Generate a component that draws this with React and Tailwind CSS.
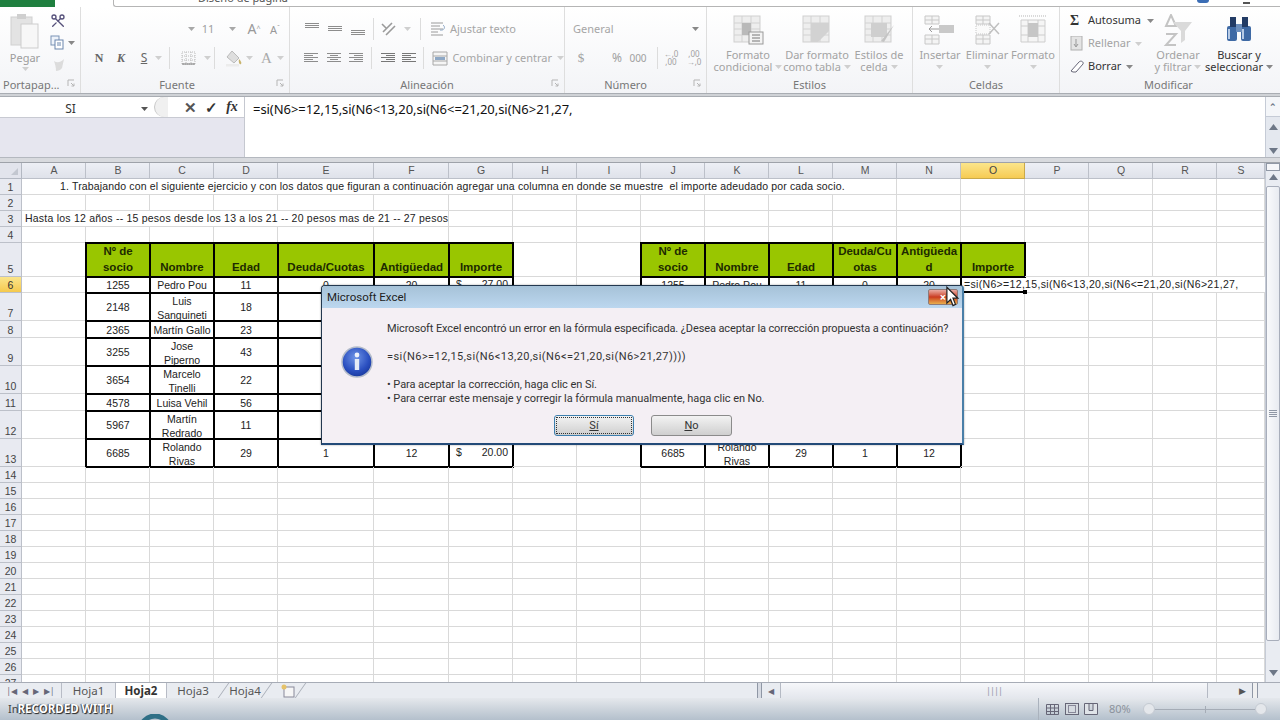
import React from 'react';
import { Scissors } from 'lucide-react';

const Caret = ({ c = '#a8a8a8' }) => (
  <svg width="7" height="4" viewBox="0 0 7 4" className="shrink-0"><path d="M0 0h7L3.5 4z" fill={c} /></svg>
);

const Launcher = () => (
  <svg width="9" height="9" viewBox="0 0 9 9" className="shrink-0">
    <path d="M1 7V1h6M4 4l3 3M7 4.5V7H4.5" fill="none" stroke="#b5b5b5" />
  </svg>
);

// little stack of horizontal lines, used by all the align buttons
const Lines = ({ widths, y = 2, c = '#8d8d8d' }) => (
  <svg width="16" height="14" viewBox="0 0 16 14">
    {widths.map((w, i) => {
      const x = w.a === 'c' ? 8 - w.w / 2 : w.a === 'r' ? 15 - w.w : 1;
      return <rect key={i} x={x} y={y + i * 2} width={w.w} height="1" fill={c} />;
    })}
  </svg>
);

const full = (n) => Array.from({ length: n }, () => ({ w: 14 }));
const alignL = [{ w: 14 }, { w: 9 }, { w: 14 }, { w: 9 }, { w: 14 }];
const alignC = [{ w: 14, a: 'c' }, { w: 8, a: 'c' }, { w: 14, a: 'c' }, { w: 8, a: 'c' }, { w: 14, a: 'c' }];
const alignR = [{ w: 14, a: 'r' }, { w: 9, a: 'r' }, { w: 14, a: 'r' }, { w: 9, a: 'r' }, { w: 14, a: 'r' }];

const Sep = () => <div className="w-px h-[22px] bg-[#dcdcdc] shrink-0" />;

const Group = ({ className, label, launcher, children }) => (
  <div className={`shrink-0 h-full flex flex-col border-r border-[#dedede] ${className}`}>
    <div className="flex-1 min-h-0">{children}</div>
    <div className="h-[16px] mb-[1px] flex items-center justify-center relative text-[11px] text-[#777] leading-none">
      {label}
      {launcher && <span className="absolute right-[4px] top-[3px]"><Launcher /></span>}
    </div>
  </div>
);

const GridIcon = ({ kind }) => (
  <svg width="32" height="30" viewBox="0 0 32 30">
    <rect x="2" y="1" width="26" height="26" fill="#eeeeee" stroke="#cfcfcf" />
    <path d="M2 8h26M2 14h26M2 20h26M10 1v26M19 1v26" stroke="#d2d2d2" fill="none" />
    {kind === 'cond' && (
      <>
        <rect x="10" y="8" width="9" height="12" fill="#b9b9b9" />
        <rect x="17" y="17" width="14" height="12" fill="#f3f3f3" stroke="#9a9a9a" />
        <path d="M20 20h8M20 23h8M20 26h8" stroke="#777" />
      </>
    )}
    {kind === 'table' && <path d="M2 8h26v8L17 27H10V8H2z" fill="#d2d2d2" />}
    {kind === 'style' && (
      <>
        <rect x="8" y="8" width="16" height="14" fill="#cfcfcf" />
        <path d="M31 10 21 27l-3-1z" fill="#c4c4c4" />
      </>
    )}
  </svg>
);

const CellIcon = ({ kind }) => (
  <svg width="34" height="30" viewBox="0 0 34 30">
    {kind === 'ins' && (
      <>
        <path d="M2 1h14v8H2zM2 20h14v9H2zM9 1v8M9 20v9M2 5h14M2 24h14" fill="#f4f4f4" stroke="#c8c8c8" />
        <rect x="16" y="10" width="15" height="8" fill="#c9c9c9" />
        <path d="M6 14h10M9 11l-3 3 3 3" stroke="#9a9a9a" fill="none" />
      </>
    )}
    {kind === 'del' && (
      <>
        <path d="M6 1h14v8H6zM6 20h14v9H6zM13 1v8M13 20v9M6 5h14M6 24h14" fill="#f4f4f4" stroke="#c8c8c8" />
        <rect x="6" y="10" width="14" height="9" fill="#fafafa" stroke="#c8c8c8" strokeDasharray="1 1" />
        <path d="M19 8l10 11M29 8 19 19" stroke="#c0c0c0" strokeWidth="1.5" />
      </>
    )}
    {kind === 'fmt' && (
      <>
        <path d="M3 1h28" stroke="#b5b5b5" strokeDasharray="1 1" />
        <path d="M5 5h24v22H5zM5 11h24M5 20h24M12 5v22M22 5v22" fill="#f5f5f5" stroke="#cdcdcd" />
        <rect x="12" y="8" width="10" height="14" fill="#c6c6c6" />
      </>
    )}
  </svg>
);

const BigButton = ({ className, kind, cell, lines }) => (
  <div className={`shrink-0 flex flex-col items-center pt-[8px] ${className}`}>
    <div className="h-[30px]">{cell ? <CellIcon kind={kind} /> : <GridIcon kind={kind} />}</div>
    <div className="mt-[4px] text-center text-[11px] leading-[12px] text-[#a3a3a3] whitespace-nowrap">
      <div>{lines[0]}</div>
      <div className="flex items-center justify-center gap-[3px] h-[12px]">{lines[1]}<Caret c="#cfcfcf" /></div>
    </div>
  </div>
);

const Ribbon = () => (
  <div className="h-[86px] flex bg-gradient-to-b from-[#ffffff] to-[#f3f4f7] text-[#a3a3a3] text-[11px]">
    <Group className="w-[81px]" label={<span className="w-full pl-[3px] text-left">Portapap...</span>} launcher>
      <div className="flex">
        <div className="w-[50px] flex flex-col items-center pt-[7px]">
          <svg width="30" height="35" viewBox="0 0 30 35">
            <rect x="1" y="3" width="21" height="28" fill="#e3e3e3" stroke="#d0d0d0" />
            <rect x="7" y="0" width="9" height="5" fill="#cfcfcf" />
            <rect x="11" y="10" width="17" height="24" fill="#f7f7f7" stroke="#cdcdcd" />
          </svg>
          <span className="mt-[3px] leading-none text-[#9c9c9c]">Pegar</span>
          <span className="mt-[4px]"><Caret c="#cfcfcf" /></span>
        </div>
        <div className="flex flex-col pt-[6px] gap-[6px]">
          <Scissors size={16} strokeWidth={2} className="text-[#55507a] rotate-90" />
          <div className="flex items-center gap-[3px]">
            <svg width="15" height="15" viewBox="0 0 15 15">
              <rect x="1" y="1" width="8" height="9" fill="#eef3fa" stroke="#7a93b5" />
              <rect x="5" y="5" width="8" height="9" fill="#fff" stroke="#6b86ad" />
              <path d="M7 8h4M7 10h4" stroke="#6b86ad" />
            </svg>
            <Caret c="#888" />
          </div>
          <svg width="16" height="16" viewBox="0 0 16 16">
            <path d="M4 5c3 2 6 2 10-2l-2 9c-1 2-4 3-6 3C6 11 5 8 4 5z" fill="#dcdcdc" />
          </svg>
        </div>
      </div>
    </Group>

    <Group className="w-[209px]" label={<span className="pr-[16px]">Fuente</span>} launcher>
      <div className="flex items-center h-[16px] mt-[14px] pl-[107px]">
        <span className="w-[8px]"><Caret /></span>
        <span className="w-[24px] text-center text-[#a0a0a0]">11</span>
        <span className="w-[24px] flex justify-center"><Caret /></span>
        <span className="w-[20px] text-center text-[14px] leading-none text-[#999]">A<sup className="text-[7px]">^</sup></span>
        <span className="w-[22px] text-center text-[11px] leading-none text-[#999]">A<sup className="text-[7px]">ˇ</sup></span>
      </div>
      <div className="flex items-center h-[16px] mt-[13px] pl-[8px]">
        <span className="w-[20px] text-center font-bold text-[12px] text-[#666] font-['Liberation_Serif',serif]">N</span>
        <span className="w-[24px] text-center font-bold italic text-[12px] text-[#666] font-['Liberation_Serif',serif]">K</span>
        <span className="w-[22px] text-center underline text-[12px] text-[#666]">S</span>
        <span className="w-[14px]"><Caret c="#cfcfcf" /></span>
        <Sep />
        <span className="w-[24px] ml-[6px] flex justify-center">
          <svg width="15" height="14" viewBox="0 0 15 14">
            <path d="M1 1h13v12H1zM5 1v12M10 1v12M1 5h13M1 9h13" fill="none" stroke="#bcbcbc" strokeDasharray="1 1" />
            <path d="M1 13h13" stroke="#777" />
          </svg>
        </span>
        <span className="w-[14px] flex justify-center"><Caret c="#cfcfcf" /></span>
        <Sep />
        <span className="w-[24px] ml-[7px] flex justify-center">
          <svg width="18" height="17" viewBox="0 0 18 17">
            <path d="M7 1l7 7-5 5-7-6z" fill="#dedede" stroke="#bbb" />
            <path d="M14 9c2 2 3 4 2 5s-3-1-2-5z" fill="#c9b46e" />
            <rect x="1" y="14" width="13" height="2.5" fill="#ececec" />
          </svg>
        </span>
        <span className="w-[10px]"><Caret c="#cfcfcf" /></span>
        <span className="w-[21px] text-center text-[15px] leading-none text-[#aaa] font-['Liberation_Serif',serif]">A</span>
        <span className="w-[10px]"><Caret c="#cfcfcf" /></span>
      </div>
    </Group>

    <Group className="w-[275px]" label="Alineación" launcher>
      <div className="flex items-center h-[16px] mt-[14px] pl-[10px]">
        <span className="w-[23px] flex justify-center"><Lines widths={full(3)} y={1} /></span>
        <span className="w-[23px] flex justify-center"><Lines widths={full(3)} y={4} /></span>
        <span className="w-[23px] flex justify-center"><Lines widths={full(3)} y={8} /></span>
        <span className="w-[4px]" />
        <Sep />
        <span className="w-[30px] flex justify-center">
          <svg width="18" height="16" viewBox="0 0 18 16">
            <path d="M3 11 12 2M6 14l9-9M2 3l5 5" stroke="#9a9a9a" strokeWidth="1.6" fill="none" />
          </svg>
        </span>
        <span className="w-[10px]"><Caret c="#cfcfcf" /></span>
        <span className="w-[6px]" />
        <Sep />
        <span className="w-[9px]" />
        <svg width="16" height="16" viewBox="0 0 16 16" className="shrink-0">
          <path d="M1 2h12M1 5h9M1 8h12M1 11h7M1 14h12" stroke="#9a9a9a" />
          <path d="M13 4c3 2 1 6-3 5" fill="none" stroke="#8ea8c6" />
        </svg>
        <span className="ml-[4px] text-[#a6a6a6]">Ajustar texto</span>
      </div>
      <div className="flex items-center h-[16px] mt-[13px] pl-[10px]">
        <span className="w-[23px] flex justify-center"><Lines widths={alignL} /></span>
        <span className="w-[23px] flex justify-center"><Lines widths={alignC} /></span>
        <span className="w-[23px] flex justify-center"><Lines widths={alignR} /></span>
        <span className="w-[4px]" />
        <Sep />
        <span className="w-[24px] ml-[4px] flex justify-center"><Lines widths={alignR} c="#777" /></span>
        <span className="w-[20px] flex justify-center"><Lines widths={alignL} c="#777" /></span>
        <span className="w-[4px]" />
        <Sep />
        <span className="w-[9px]" />
        <svg width="16" height="15" viewBox="0 0 16 15" className="shrink-0">
          <path d="M1 1h14v13H1zM1 5h14M1 10h14" fill="#f5f5f5" stroke="#a8a8a8" />
          <rect x="3" y="6" width="10" height="3" fill="#8ea8c6" />
        </svg>
        <span className="ml-[4px] text-[#a6a6a6] whitespace-nowrap">Combinar y centrar</span>
        <span className="ml-[5px]"><Caret c="#cfcfcf" /></span>
      </div>
    </Group>

    <Group className="w-[142px]" label={<span className="pr-[20px]">Número</span>} launcher>
      <div className="flex items-center justify-between h-[16px] mt-[14px] pl-[8px] pr-[7px]">
        <span className="text-[#a6a6a6]">General</span>
        <Caret c="#888" />
      </div>
      <div className="flex items-center h-[16px] mt-[13px] pl-[10px] text-[#a0a0a0]">
        <span className="w-[12px] text-center font-['Liberation_Serif',serif] text-[13px]">$</span>
        <span className="w-[22px]" />
        <span className="w-[16px] text-center text-[12px]">%</span>
        <span className="w-[26px] text-center text-[10px]">000</span>
        <span className="w-[6px]" />
        <Sep />
        <span className="w-[26px] text-center text-[8px] leading-[8px]">←,0<br />,00</span>
        <span className="w-[20px] text-center text-[8px] leading-[8px]">,00<br />→,0</span>
      </div>
    </Group>

    <Group className="w-[206px]" label="Estilos">
      <div className="flex pl-[7px]">
        <BigButton className="w-[68px]" kind="cond" lines={['Formato', 'condicional']} />
        <BigButton className="w-[70px]" kind="table" lines={['Dar formato', 'como tabla']} />
        <BigButton className="w-[54px]" kind="style" lines={['Estilos de', 'celda']} />
      </div>
    </Group>

    <Group className="w-[147px]" label="Celdas">
      <div className="flex pl-[3px]">
        <BigButton cell className="w-[48px]" kind="ins" lines={['Insertar', '']} />
        <BigButton cell className="w-[46px]" kind="del" lines={['Eliminar', '']} />
        <BigButton cell className="w-[46px]" kind="fmt" lines={['Formato', '']} />
      </div>
    </Group>

    <Group className="w-[217px] border-r-0" label="Modificar">
      <div className="flex">
        <div className="w-[95px] pl-[10px] pt-[6px] flex flex-col gap-[8px]">
          <div className="flex items-center h-[15px] text-[#333]">
            <span className="w-[18px] font-bold text-[14px] leading-none font-['Liberation_Serif',serif]">Σ</span>
            <span>Autosuma</span>
            <span className="ml-[6px]"><Caret c="#888" /></span>
          </div>
          <div className="flex items-center h-[15px] text-[#a3a3a3]">
            <svg width="18" height="15" viewBox="0 0 18 15" className="shrink-0">
              <rect x="1" y="0" width="11" height="14" fill="#e4e4e4" stroke="#b0b0b0" />
              <path d="M6 3v7M4 8l2 3 2-3" stroke="#999" fill="none" />
            </svg>
            <span>Rellenar</span>
            <span className="ml-[5px]"><Caret c="#cfcfcf" /></span>
          </div>
          <div className="flex items-center h-[15px] text-[#333]">
            <svg width="18" height="15" viewBox="0 0 18 15" className="shrink-0">
              <path d="M1 12 9 3c2-2 5 0 4 2L6 13H3z" fill="#fff" stroke="#667" />
            </svg>
            <span>Borrar</span>
            <span className="ml-[5px]"><Caret c="#888" /></span>
          </div>
        </div>
        <div className="w-[46px] flex flex-col items-center pt-[7px]">
          <svg width="30" height="32" viewBox="0 0 30 32">
            <path d="M8 1 3 12h10zM3 20h10L3 31h10" fill="none" stroke="#c4c4c4" strokeWidth="2" />
            <path d="M10 8h19l-7 9v9l-4 3V17z" fill="#dadada" />
          </svg>
          <div className="mt-[3px] text-center leading-[12px] text-[#a3a3a3] whitespace-nowrap">
            <div>Ordenar</div>
            <div className="flex items-center gap-[3px]">y filtrar<Caret c="#cfcfcf" /></div>
          </div>
        </div>
        <div className="w-[76px] flex flex-col items-center pt-[7px]">
          <svg width="30" height="32" viewBox="0 0 30 32">
            <rect x="3" y="12" width="10" height="15" rx="2" fill="#3f6aa5" />
            <rect x="17" y="12" width="10" height="15" rx="2" fill="#3f6aa5" />
            <rect x="6" y="3" width="6" height="10" fill="#233c66" />
            <rect x="18" y="3" width="6" height="10" fill="#233c66" />
            <rect x="12" y="10" width="6" height="8" fill="#6d8fbd" />
            <path d="M5 15v10M19 15v10" stroke="#b7cbe6" strokeWidth="2" />
          </svg>
          <div className="mt-[3px] text-center leading-[12px] text-[#333] whitespace-nowrap">
            <div>Buscar y</div>
            <div className="flex items-center gap-[3px]">seleccionar<Caret c="#888" /></div>
          </div>
        </div>
      </div>
    </Group>
  </div>
);

const ScrollBtn = ({ up }) => (
  <svg width="9" height="6" viewBox="0 0 9 6"><path d={up ? 'M0 6h9L4.5 0z' : 'M0 0h9L4.5 6z'} fill="#6d7787" /></svg>
);

const FormulaBar = () => (
  <div className="h-[61px] flex bg-white text-[12px] border-b border-[#b4b8bf]">
    <div className="w-[245px] shrink-0 flex flex-col border-r border-[#c5c8d0]">
      <div className="h-[21px] flex items-center border-b border-[#c8cad2]">
        <div className="w-[148px] flex items-center pt-[3px]">
          <span className="w-[142px] text-center text-[12px] text-[#333]">SI</span>
          <Caret c="#555" />
        </div>
        <div className="h-full w-[14px] ml-[6px] rounded-l-full border-l border-[#c7c7c7] bg-[#f0f0f0]" />
        <span className="w-[22px] ml-[11px] text-center text-[15px] font-bold text-[#555] leading-none">✕</span>
        <span className="w-[20px] text-center text-[15px] font-bold text-[#333] leading-none">✓</span>
        <span className="w-[22px] text-center font-['Liberation_Serif',serif] italic font-bold text-[14px] leading-none text-[#333]">fx</span>
      </div>
      <div className="flex-1 bg-[#e6e6ef]" />
    </div>
    <div className="flex-1 pl-[8px] pt-[3px] text-[13px] leading-[18px] text-[#111] tracking-[-0.05px]">=si(N6&gt;=12,15,si(N6&lt;13,20,si(N6&lt;=21,20,si(N6&gt;21,27,</div>
    <div className="w-[15px] shrink-0 flex flex-col items-center bg-[#e4e8ef] border-l border-[#c5cbd6]">
      <div className="h-[20px] w-full flex items-center justify-center bg-[#f4f6f9] border-b border-[#c5cbd6] text-[9px] text-[#6d7787] leading-none font-bold">⌃</div>
      <div className="mt-[7px]"><ScrollBtn up /></div>
      <div className="mt-[18px]"><ScrollBtn /></div>
    </div>
  </div>
);

const columns = ['A', 'B', 'C', 'D', 'E', 'F', 'G', 'H', 'I', 'J', 'K', 'L', 'M', 'N', 'O', 'P', 'Q', 'R', 'S'];

const socios = [
  [6, '1255', ['Pedro Pou'], '11', '0', '20', '27.00'],
  [7, '2148', ['Luis', 'Sanguineti'], '18', '', '', ''],
  [8, '2365', ['Martín Gallo'], '23', '', '', ''],
  [9, '3255', ['Jose', 'Piperno'], '43', '', '', ''],
  [10, '3654', ['Marcelo', 'Tinelli'], '22', '', '', ''],
  [11, '4578', ['Luisa Vehil'], '56', '', '', ''],
  [12, '5967', ['Martín', 'Redrado'], '11', '', '', ''],
  [13, '6685', ['Rolando', 'Rivas'], '29', '1', '12', '20.00'],
];

const tableBorder = 'border border-black shadow-[0_0_0_1px_#000]';

const Head = ({ lines }) => (
  <div className={`${tableBorder} bg-[#99c600] flex flex-col items-center justify-end pb-[1px] text-[11.5px] leading-[16px] font-bold text-[#1d2a00] text-center`}>
    {lines.map((l) => <span key={l}>{l}</span>)}
  </div>
);

const Data = ({ two, children }) => (
  <div className={`${tableBorder} ${two ? 'pt-[2px]' : ''} flex flex-col items-center justify-center text-center text-[10.5px] leading-[14px] text-[#222] overflow-hidden`}>
    {children}
  </div>
);

const Blank = () => <div className="border-r border-b border-[#d9d9d9]" />;

const RowHead = ({ n }) => (
  <div className={`flex items-end justify-center text-[10.5px] leading-[14px] border-b border-r border-[#bcc0c9] ${n === 6 ? 'bg-gradient-to-b from-[#fbe58a] to-[#f5c94c] text-[#333]' : 'bg-[#e8eaf1] text-[#444]'}`}>
    {n}
  </div>
);

const sheetCells = (n) => {
  const cells = [];
  const blanks = (count, prefix) => {
    for (let i = 0; i < count; i++) cells.push(<Blank key={`${prefix}-${i}`} />);
  };

  if (n === 1) {
    cells.push(
      <div key="t" className="col-span-13 border-b border-r border-[#d9d9d9] pl-[38px] flex items-end text-[10.5px] leading-[15px] text-[#222] whitespace-nowrap tracking-[0.155px]">
        1. Trabajando con el siguiente ejercicio y con los datos que figuran a continuación agregar una columna en donde se muestre&nbsp; el importe adeudado por cada socio.
      </div>
    );
    blanks(6, 'r1');
  } else if (n === 3) {
    cells.push(
      <div key="t" className="col-span-6 border-b border-r border-[#d9d9d9] pl-[3px] flex items-end text-[10.5px] leading-[15px] text-[#222] whitespace-nowrap tracking-[0.22px]">
        Hasta los 12 años -- 15 pesos desde los 13 a los 21 -- 20 pesos mas de 21 -- 27 pesos
      </div>
    );
    blanks(13, 'r3');
  } else if (n === 5) {
    blanks(1, 'a');
    [['Nº de', 'socio'], ['Nombre'], ['Edad'], ['Deuda/Cuotas'], ['Antigüedad'], ['Importe']].forEach((l, i) => cells.push(<Head key={`h${i}`} lines={l} />));
    blanks(2, 'hi');
    [['Nº de', 'socio'], ['Nombre'], ['Edad'], ['Deuda/Cu', 'otas'], ['Antigüeda', 'd'], ['Importe']].forEach((l, i) => cells.push(<Head key={`j${i}`} lines={l} />));
    blanks(4, 'ps');
  } else if (n >= 6 && n <= 13) {
    const [, id, name, edad, deuda, ant, imp] = socios[n - 6];
    const nameCell = name.map((l) => <span key={l}>{l}</span>);
    const two = name.length > 1;
    blanks(1, 'a');
    cells.push(<Data key="b">{id}</Data>, <Data key="c" two={two}>{nameCell}</Data>, <Data key="d">{edad}</Data>, <Data key="e">{deuda}</Data>, <Data key="f">{ant}</Data>);
    cells.push(
      <div key="g" className={`${tableBorder} flex items-center justify-between pl-[6px] pr-[4px] text-[10.5px] text-[#222]`}>
        {imp && <span>$</span>}
        {imp && <span>{imp}</span>}
      </div>
    );
    blanks(2, 'hi');
    cells.push(<Data key="j">{id}</Data>, <Data key="k" two={two}>{nameCell}</Data>, <Data key="l">{edad}</Data>, <Data key="m">{deuda}</Data>, <Data key="n">{ant}</Data>);
    if (n === 6) {
      cells.push(
        <div key="o" className="col-span-5 relative border-b border-[#d9d9d9] flex items-center pl-[3px] text-[10.5px] text-[#222] whitespace-nowrap tracking-[0.33px]">
          =si(N6&gt;=12,15,si(N6&lt;13,20,si(N6&lt;=21,20,si(N6&gt;21,27,
          <span className="absolute left-0 -bottom-[1px] w-[64px] h-[2px] bg-black" />
          <span className="absolute left-[62px] -bottom-[2px] w-[4px] h-[4px] bg-black" />
        </div>
      );
    } else {
      blanks(5, 'os');
    }
  } else {
    blanks(19, 'x');
  }
  return cells;
};

const Sheet = () => {
  const rows = Array.from({ length: 27 }, (_, i) => i + 1);
  return (
    <div className="h-[519px] flex font-['Liberation_Sans',sans-serif]">
      <div className="w-[1265px] shrink-0 overflow-hidden grid grid-cols-[22px_64px_64px_64px_64px_96px_75px_64px_64px_64px_64px_64px_64px_64px_64px_64px_64px_64px_64px_48px] grid-rows-[16px_16px_16px_16px_16px_34px_16px_28px_17px_28px_28px_17px_28px_28px_repeat(14,16px)]">
        <div className="bg-[#e2e4ec] border-r border-b border-[#b3b8c2] flex items-end justify-end pr-[3px] pb-[3px]">
          <svg width="7" height="7" viewBox="0 0 7 7"><path d="M7 0v7H0z" fill="#c3c7d0" /></svg>
        </div>
        {columns.map((c) => (
          <div key={c} className={`flex items-center justify-center pl-[1px] text-[10.5px] border-b border-r ${c === 'O' ? 'bg-gradient-to-b from-[#fbe58a] to-[#f6cb52] text-[#444] border-[#c9a94a]' : 'bg-gradient-to-b from-[#edeff5] to-[#dfe2ea] text-[#555] border-[#bcc0c9]'}`}>
            {c}
          </div>
        ))}
        {rows.map((n) => (
          <React.Fragment key={n}>
            <RowHead n={n} />
            {sheetCells(n)}
          </React.Fragment>
        ))}
      </div>
      <div className="w-[15px] shrink-0 flex flex-col items-center bg-[#e9ecf2] border-l border-[#c5cbd6]">
        <div className="h-[8px] w-full bg-[#f5f6f9] border border-[#8f97a5]" />
        <div className="mt-[3px]"><ScrollBtn up /></div>
        <div className="mt-[6px] h-[455px] w-full flex items-center justify-center bg-gradient-to-r from-[#f9fafc] to-[#e8ebf1] border border-[#a8aebb] rounded-[2px]">
          <div className="w-[8px] h-[7px] border-y-[3px] border-double border-[#8f97a5]" />
        </div>
        <div className="flex-1" />
        <div className="mb-[6px]"><ScrollBtn /></div>
      </div>
    </div>
  );
};

const TabSlant = () => <span className="w-px h-[15px] bg-[#a9aeb8] -skew-x-[35deg] mx-[4px] shrink-0" />;

const SheetTabs = () => (
  <div className="h-[16px] flex items-center bg-[#e9ecf1] border-t border-[#a7acb6] text-[11.5px] text-[#555] leading-none">
    <div className="w-[62px] shrink-0 flex items-center justify-around px-[4px] text-[8px] text-[#667] border-r border-[#b8bcc6] h-full">
      <span>|◀</span><span>◀</span><span>▶</span><span>▶|</span>
    </div>
    <span className="w-[53px] text-center">Hoja1</span>
    <span className="w-[52px] h-full flex items-center justify-center bg-white font-bold text-[#333] border-x border-[#b8bcc6]">Hoja2</span>
    <span className="w-[52px] text-center">Hoja3</span>
    <TabSlant />
    <span className="w-[34px] text-center">Hoja4</span>
    <TabSlant />
    <svg width="16" height="14" viewBox="0 0 16 14" className="ml-[9px] shrink-0">
      <rect x="4" y="3" width="10" height="10" fill="#f6f6f6" stroke="#889" />
      <circle cx="4" cy="3" r="2.5" fill="#e6c36a" />
    </svg>
    <TabSlant />
    <div className="flex-1" />
    <div className="w-[5px] h-full bg-[#d6dae2] border-x border-[#8f97a5]" />
    <span className="w-[18px] text-center text-[8px] text-[#667]">◀</span>
    <div className="w-[428px] h-full flex items-center justify-center bg-gradient-to-b from-[#f6f7fa] to-[#e4e7ed] border-x border-[#b5bac4] text-[9px] tracking-[-1px] text-[#8f97a5]">||||</div>
    <div className="w-[14px] text-center text-[9px] text-[#555] ml-[27px]">▶</div>
    <div className="w-[6px] h-full bg-[#f0f0f0] border-x border-[#8f97a5] ml-[3px] mr-[22px]" />
  </div>
);

const StatusBar = () => (
  <div className="flex-1 flex bg-gradient-to-b from-[#e5e8ec] to-[#b4c0cc] relative overflow-hidden">
    <div className="w-[1038px] flex items-center pl-[8px] text-[11px] text-[#444]">
      <span>In</span>
      <span className="-ml-[1px] font-bold text-[11.5px] text-white [text-shadow:1px_1px_1px_#222,-1px_0_1px_#444]">RECORDED WITH</span>
    </div>
    <div className="flex-1 flex items-center border-l border-[#aab2bd] pl-[7px] text-[#8b929c]">
      <svg width="13" height="11" viewBox="0 0 13 11" className="shrink-0">
        <path d="M.5.5h12v10H.5zM.5 4h12M.5 7.5h12M4.500 .5v10M8.500 .5v10" fill="none" stroke="#667" />
      </svg>
      <svg width="14" height="12" viewBox="0 0 14 12" className="ml-[6px] shrink-0">
        <rect x=".5" y=".5" width="13" height="11" fill="#d5dae0" stroke="#667" />
        <rect x="3.500" y="2.500" width="7" height="7" fill="none" stroke="#889" />
      </svg>
      <svg width="14" height="12" viewBox="0 0 14 12" className="ml-[5px] shrink-0">
        <path d="M.5.5h13v11H.5zM5 .5v7H9V.5" fill="#dfe3e8" stroke="#667" />
      </svg>
      <span className="ml-[11px] text-[11px]">80%</span>
      <span className="ml-[12px] w-[12px] h-[12px] rounded-full bg-[#e4e7eb] border border-[#c4cad2] shrink-0" />
      <div className="w-[100px] h-px bg-[#a5acb6] relative">
        <span className="absolute left-[50px] -top-[3px] h-[7px] w-px bg-[#a5acb6]" />
      </div>
      <span className="w-[12px] h-[12px] rounded-full bg-[#e4e7eb] border border-[#c4cad2] shrink-0" />
    </div>
    <svg width="34" height="6" viewBox="0 0 34 6" className="absolute left-[138px] bottom-0">
      <circle cx="17" cy="17" r="15" fill="none" stroke="#2f6f86" strokeWidth="5" />
    </svg>
  </div>
);

const InfoIcon = () => (
  <svg width="32" height="32" viewBox="0 0 32 32">
    <defs>
      <radialGradient id="inf" cx="0.45" cy="0.35" r="0.75">
        <stop offset="0" stopColor="#6f94e6" />
        <stop offset="0.6" stopColor="#2a4fc0" />
        <stop offset="1" stopColor="#13308f" />
      </radialGradient>
    </defs>
    <circle cx="16" cy="16" r="15" fill="url(#inf)" stroke="#b4bcca" strokeWidth="1.5" />
    <circle cx="16" cy="9" r="2.400" fill="#eef2fb" />
    <path d="M13.800 13h4.400v11h-4.400z" fill="#e6ebf6" />
  </svg>
);

const ErrorDialog = () => (
  <div className="absolute left-[321px] top-[285px] w-[643px] h-[160px] flex flex-col border border-[#23384f] border-r-[2px] border-b-[2px] border-r-[#4a7fa8] border-b-[#234a78] rounded-t-[4px] overflow-hidden bg-[#f4eff4] shadow-[0_0_2px_#0006] font-['Roboto',sans-serif] text-[#333]">
    <div className="h-[22px] shrink-0 flex items-center justify-between pl-[5px] pr-[4px] bg-gradient-to-b from-[#a6c2d8] to-[#bcd7ef]">
      <span className="pt-[1px] text-[11.5px] text-[#222]">Microsoft Excel</span>
      <div className="w-[30px] h-[16px] flex items-center justify-center rounded-[2px] border border-[#8e7a78] bg-gradient-to-b from-[#e9aaa2] via-[#c9391f] to-[#e7ad4d] text-white text-[11px] font-bold leading-none">×</div>
    </div>
    <div className="flex-1 flex">
      <div className="w-[65px] shrink-0 flex justify-center items-start pt-[38px] pl-[4px]">
        <InfoIcon />
      </div>
      <div className="flex-1 flex flex-col text-[11px] leading-[14px] whitespace-nowrap">
        <div className="mt-[14px] tracking-[-0.11px]">Microsoft Excel encontró un error en la fórmula especificada. ¿Desea aceptar la corrección propuesta a continuación?</div>
        <div className="mt-[14px] tracking-[0.45px]">=si(N6&gt;=12,15,si(N6&lt;13,20,si(N6&lt;=21,20,si(N6&gt;21,27))))</div>
        <div className="mt-[14px] tracking-[-0.06px]">• Para aceptar la corrección, haga clic en Sí.</div>
        <div className="tracking-[-0.06px]">• Para cerrar este mensaje y corregir la fórmula manualmente, haga clic en No.</div>
        <div className="flex mt-[9px] ml-[167px] gap-[17px]">
          <button className="w-[80px] h-[21px] rounded-[3px] border border-[#3d7fae] bg-gradient-to-b from-[#f3f3f3] to-[#cfcfcf] p-[1px]">
            <span className="h-full flex items-center justify-center border border-dotted border-[#333]"><span className="underline">Sí</span></span>
          </button>
          <button className="w-[81px] h-[21px] rounded-[3px] border border-[#8b8b8b] bg-gradient-to-b from-[#f3f3f3] to-[#cfcfcf] flex items-center justify-center">
            <span><span className="underline">N</span>o</span>
          </button>
        </div>
      </div>
    </div>
  </div>
);

const Cursor = () => (
  <svg width="16" height="22" viewBox="0 0 12 18" className="absolute left-[945px] top-[286px]">
    <path d="M1 1v13l3-3 2 5 2-1-2-5h4z" fill="#fff" stroke="#222" strokeWidth="1" />
  </svg>
);

export default function App() {
  return (
    <div className="w-[1280px] h-[720px] relative overflow-hidden flex flex-col bg-white font-['Noto_Sans',sans-serif]">
      <div className="h-[7px] flex bg-white overflow-hidden shrink-0">
        <div className="w-[55px] bg-[#1f7f3f]" />
        <div className="ml-[58px] flex-1 border-b border-l border-[#b5b5b5] rounded-bl-[3px] flex justify-between overflow-hidden">
          <span className="ml-[84px] -mt-[9px] text-[11px] leading-[13px] text-[#555]">Diseño de página</span>
          <span className="mr-[30px] flex items-start gap-[34px]">
            <span className="w-[12px] h-[3px] rounded-b-full bg-[#3b6db5]" />
            <span className="w-[7px] h-[2px] mt-[2px] bg-[#555]" />
          </span>
        </div>
      </div>
      <Ribbon />
      <div className="h-[4px] shrink-0 bg-[#cfd2d6] border-y border-[#a9adb3]" />
      <FormulaBar />
      <div className="h-[5px] shrink-0 bg-[#d8dade] border-b border-[#9ea2a9]" />
      <Sheet />
      <SheetTabs />
      <StatusBar />
      <ErrorDialog />
      <Cursor />
    </div>
  );
}
